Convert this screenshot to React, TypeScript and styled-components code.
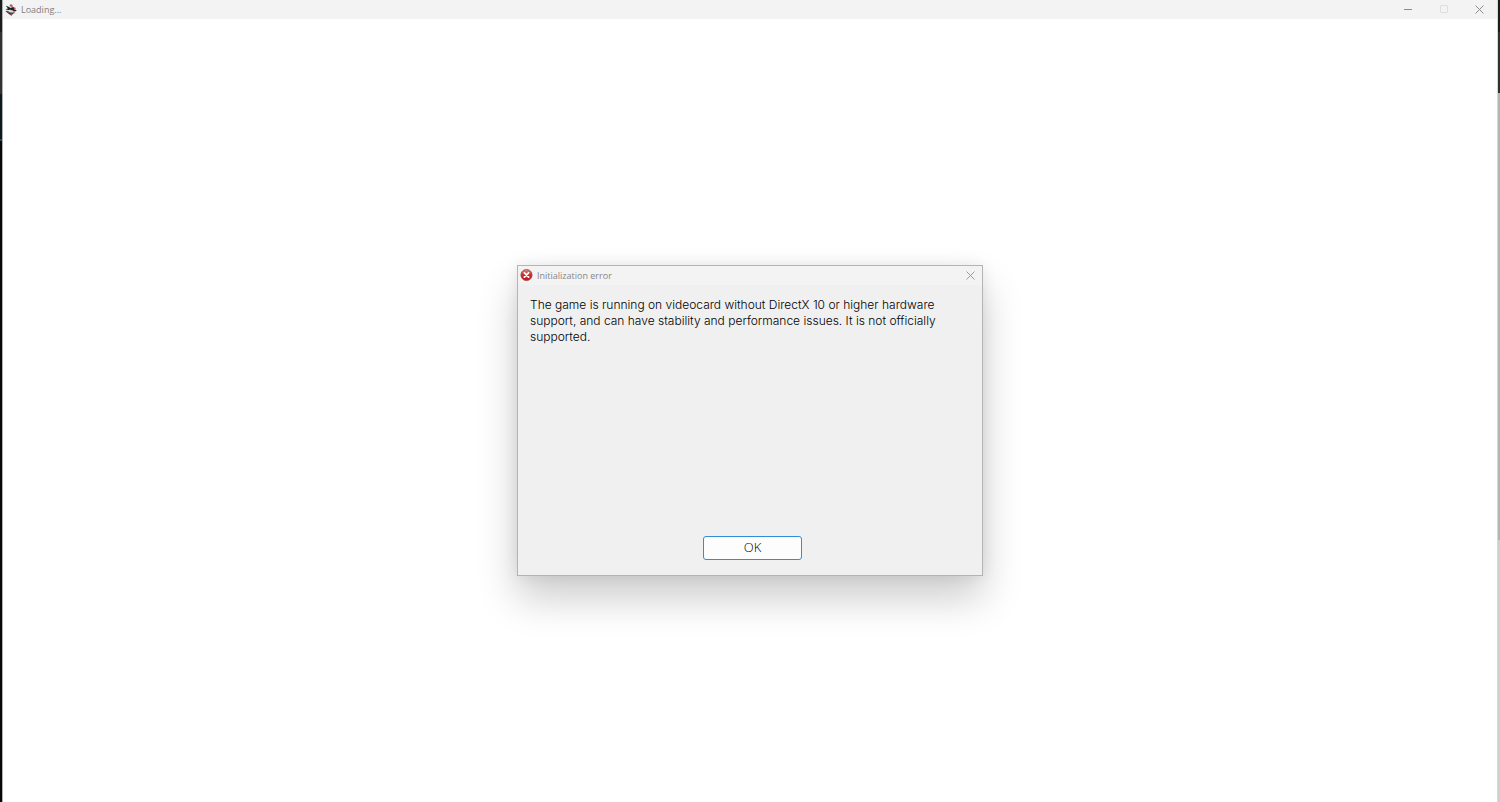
import React from "react";
import styled, { createGlobalStyle } from "styled-components";

const GlobalStyle = createGlobalStyle`
  *, *::before, *::after { box-sizing: border-box; }
  body { margin: 0; background: #fff; }
  button { font: inherit; }
`;

const Desktop = styled.div`
  display: grid;
  grid-template-columns: 3px minmax(0, 1fr) 3px;
  min-height: 100vh;
  font-family: "Open Sans", "Noto Sans", sans-serif;
`;

const LeftEdge = styled.div`
  border-right: 1px solid #b0b0b0;
  background: linear-gradient(#1c1c1e 0 32px, #353133 32px 94px, #0c1a20 94px 139px, #2c4450 139px 141px, #06090c 141px);
`;

const RightEdge = styled.div`
  border-left: 1px solid #d8d8d8;
  background: linear-gradient(#1b1b1b 0 32px, #303030 32px 93px, #b4b4b4 93px 540px, #cfcfcf 540px);
`;

const Window = styled.section`
  display: flex;
  flex-direction: column;
  background: #fff;
`;

const TitleBar = styled.header<{ $inset: number }>`
  display: flex;
  align-items: center;
  height: 19px;
  padding-left: ${(p) => p.$inset}px;
  background: #f3f3f3;
`;

const Title = styled.h1<{ $color: string }>`
  flex: 1;
  margin: 0 0 0 4px;
  font-size: 9px;
  font-weight: 400;
  line-height: 13px;
  color: ${(p) => p.$color};
`;

const CaptionButton = styled.button<{ $width: number; $color: string }>`
  display: flex;
  align-items: center;
  justify-content: center;
  width: ${(p) => p.$width}px;
  height: 19px;
  padding: 0;
  border: 0;
  background: none;
  color: ${(p) => p.$color};
`;

const Client = styled.main`
  display: flex;
  flex: 1;
  align-items: center;
  justify-content: center;
  padding-top: 19px;
`;

const Dialog = styled.section`
  display: flex;
  flex-direction: column;
  width: 466px;
  min-height: 311px;
  border: 1px solid #b4b4b4;
  background: #f0f0f0;
  box-shadow: 0 22px 38px rgba(0, 0, 0, 0.2), 0 0 14px rgba(0, 0, 0, 0.08);
`;

const Message = styled.p`
  flex: 1;
  margin: 0;
  padding: 12px 36px 0 12px;
  font-family: Inter, "Liberation Sans", Arial, sans-serif;
  font-size: 12px;
  font-weight: 300;
  line-height: 16px;
  color: #000;
`;

const Actions = styled.footer`
  display: flex;
  justify-content: center;
  padding: 0 0 15px 5px;
`;

const OkButton = styled.button`
  width: 99px;
  height: 24px;
  padding: 0 0 1px;
  border: 1px solid #2f8ed6;
  border-radius: 3px;
  background: #fdfdfd;
  font-size: 13px;
  font-weight: 300;
  line-height: 16px;
  color: #000;
`;

const AppIcon = () => (
  <svg width="12" height="12" viewBox="0 0 12 12" aria-hidden="true">
    <path d="M6 0.5 11.5 6 6 11.5 0.5 6Z" fill="#d3dcdf" />
    <path d="M4.4 1.6 6 0 8.2 2 6.6 3.2Z" fill="#cc5254" />
    <path d="M0.8 1.8 3 2.4 5.6 4 8 3 10 4 8.6 5 11.8 6.6 10 7.6 7 6.2 5 5.8 3.2 6 0.4 5.2 3 4.4Z" fill="#17232b" />
    <path d="M0.4 7.2 2.6 7 5 8.6 7.4 8.4 10.4 9 8.2 9.6 6.4 11.8 4.6 10.4Z" fill="#2b3a42" />
    <path d="M2.2 8H4M8 8.2H9.6M5.4 10.2H7M9.2 4.4H10.6" stroke="#cf3f42" strokeWidth="1.2" fill="none" />
  </svg>
);

const ErrorIcon = () => (
  <svg width="13" height="13" viewBox="0 0 13 13" aria-hidden="true">
    <defs>
      <linearGradient id="errorFill" x1="0" y1="0" x2="0" y2="1">
        <stop offset="0" stopColor="#d98a88" />
        <stop offset="0.45" stopColor="#c9302f" />
        <stop offset="1" stopColor="#c5141b" />
      </linearGradient>
    </defs>
    <circle cx="6.5" cy="6" r="5.6" fill="url(#errorFill)" stroke="#9c4a49" strokeWidth="0.8" />
    <path d="M4.4 3.9 8.6 8.1M8.6 3.9 4.4 8.1" stroke="#fff" strokeWidth="1.9" strokeLinecap="round" />
  </svg>
);

const CloseGlyph = () => (
  <svg width="9" height="9" viewBox="0 0 9 9" aria-hidden="true">
    <path d="M0.5 0.5 8.5 8.5M8.5 0.5 0.5 8.5" stroke="currentColor" fill="none" />
  </svg>
);

export default function App() {
  return (
    <>
      <GlobalStyle />
      <Desktop>
        <LeftEdge />
        <Window aria-label="Loading...">
          <TitleBar $inset={2}>
            <AppIcon />
            <Title $color="#808080">Loading...</Title>
            <CaptionButton $width={36} $color="#8c8c8c" aria-label="Minimize">
              <svg width="8" height="9" viewBox="0 0 8 9" aria-hidden="true">
                <path d="M0 4.5H8" stroke="currentColor" />
              </svg>
            </CaptionButton>
            <CaptionButton $width={36} $color="#dedede" aria-label="Maximize" disabled>
              <svg width="8" height="9" viewBox="0 0 8 9" aria-hidden="true">
                <rect x="0.5" y="0.5" width="7" height="7" rx="0.5" stroke="currentColor" fill="none" />
              </svg>
            </CaptionButton>
            <CaptionButton $width={35} $color="#8c8c8c" aria-label="Close">
              <CloseGlyph />
            </CaptionButton>
          </TitleBar>
          <Client>
            <Dialog role="alertdialog" aria-labelledby="dialog-title" aria-describedby="dialog-message">
              <TitleBar $inset={2}>
                <ErrorIcon />
                <Title as="h2" id="dialog-title" $color="#868686">Initialization error</Title>
                <CaptionButton $width={23} $color="#9a9a9a" aria-label="Close dialog">
                  <CloseGlyph />
                </CaptionButton>
              </TitleBar>
              <Message id="dialog-message">
                The game is running on videocard without DirectX 10 or higher hardware support, and can have
                stability and performance issues. It is not officially supported.
              </Message>
              <Actions>
                <OkButton>OK</OkButton>
              </Actions>
            </Dialog>
          </Client>
        </Window>
        <RightEdge />
      </Desktop>
    </>
  );
}
